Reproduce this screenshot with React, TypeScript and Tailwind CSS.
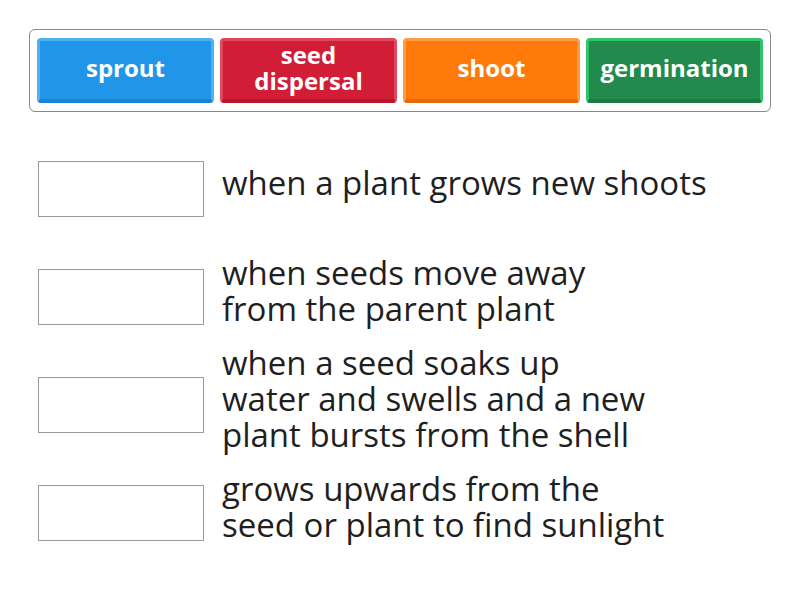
const tiles = [
  { label: 'sprout', cls: 'bg-[#2196e8] border-[#4fb0f2] border-b-[#1b82d2]' },
  { label: 'seed dispersal', cls: 'bg-[#d21d36] border-[#e2485c] border-b-[#b8152c]' },
  { label: 'shoot', cls: 'bg-[#ff7a0a] border-[#ff9a45] border-b-[#e56a04]' },
  { label: 'germination', cls: 'bg-[#218a4c] border-[#2fc46b] border-b-[#1b7a41]' },
];

const prompts = [
  ['when a plant grows new shoots'],
  ['when seeds move away', 'from the parent plant'],
  ['when a seed soaks up', 'water and swells and a new', 'plant bursts from the shell'],
  ['grows upwards from the', 'seed or plant to find sunlight'],
];

export default function App() {
  return (
    <div className="w-[800px] h-[600px] bg-white font-['Open_Sans',sans-serif] pt-[29px] px-[29px]">
      <div className="w-[742px] h-[83px] border border-[#8a8a8a] rounded-md flex items-center gap-[6px] px-[7px]">
        {tiles.map((t) => (
          <div
            key={t.label}
            className={`w-[177px] h-[65px] rounded-[4px] border-[3px] border-b-4 flex items-center justify-center text-white font-bold text-[24px] leading-[26px] text-center px-3 pb-[4px] ${t.cls}`}
          >
            {t.label}
          </div>
        ))}
      </div>

      <div className="mt-[49px] flex flex-col gap-[53px] pl-[9px]">
        {prompts.map((lines, i) => (
          <div key={i} className="flex items-center h-[55px]">
            <div className="w-[166px] h-[56px] border border-[#9a9a9a] bg-white shrink-0" />
            <div className="ml-[18px] mb-[12px] text-[33px] leading-[36px] text-[#1f1f1f] whitespace-nowrap">
              {lines.map((l) => (
                <div key={l}>{l}</div>
              ))}
            </div>
          </div>
        ))}
      </div>
    </div>
  );
}
